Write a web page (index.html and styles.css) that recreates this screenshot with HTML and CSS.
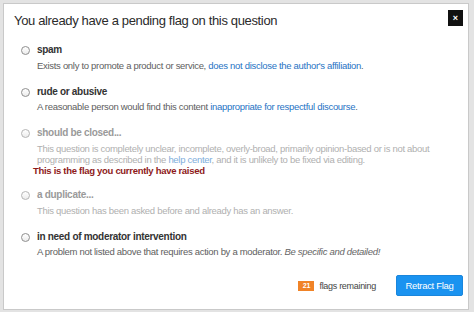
FILE: index.html
```html
<!DOCTYPE html>
<html lang="en">
<head>
    <meta charset="UTF-8">
    <meta name="viewport" content="width=device-width, initial-scale=1.0">
    <title>Flag this question</title>
    <link rel="stylesheet" href="styles.css">
</head>
<body>

<div class="dialog">
    <div class="dialog-header">
        <h1>You already have a pending flag on this question</h1>
        <button class="close-button" title="close">&times;</button>
    </div>

    <ul class="flag-options">
        <li class="flag-option">
            <span class="radio"></span>
            <div>
                <div class="flag-label">spam</div>
                <div class="flag-desc">Exists only to promote a product or service, <a href="#">does not disclose the author's affiliation</a>.</div>
            </div>
        </li>
        <li class="flag-option">
            <span class="radio"></span>
            <div>
                <div class="flag-label">rude or abusive</div>
                <div class="flag-desc">A reasonable person would find this content <a href="#">inappropriate for respectful discourse</a>.</div>
            </div>
        </li>
        <li class="flag-option disabled">
            <span class="radio"></span>
            <div>
                <div class="flag-label">should be closed...</div>
                <div class="flag-desc">This question is completely unclear, incomplete, overly-broad, primarily opinion-based or is not about<br>programming as described in the <a href="#">help center</a>, and it is unlikely to be fixed via editing.</div>
                <div class="current-flag">This is the flag you currently have raised</div>
            </div>
        </li>
        <li class="flag-option disabled">
            <span class="radio"></span>
            <div>
                <div class="flag-label">a duplicate...</div>
                <div class="flag-desc">This question has been asked before and already has an answer.</div>
            </div>
        </li>
        <li class="flag-option">
            <span class="radio"></span>
            <div>
                <div class="flag-label">in need of moderator intervention</div>
                <div class="flag-desc">A problem not listed above that requires action by a moderator. <em>Be specific and detailed!</em></div>
            </div>
        </li>
    </ul>

    <div class="dialog-footer">
        <span class="flags-left"><span class="badge">21</span>flags remaining</span>
        <button class="retract-button">Retract Flag</button>
    </div>
</div>

</body>
</html>
```

FILE: styles.css
```css
body {
    font-family: "Liberation Sans", Arial, sans-serif;
    background-color: #e3e3e3;
    color: #333;
    margin: 0;
    padding: 3px 0 0 3px;
    letter-spacing: -0.3px;
}
.dialog {
    box-sizing: border-box;
    width: 466px;
    height: 307px;
    background-color: #fff;
    border: 1px solid #c9c9c9;
    display: flex;
    flex-direction: column;
}
.dialog-header {
    display: flex;
    justify-content: space-between;
    align-items: flex-start;
    padding: 6px 5px 0 10px;
}
.dialog-header h1 {
    margin: 0;
    font-size: 13px;
    font-weight: normal;
    line-height: 22px;
    color: #2b2b2b;
    letter-spacing: -0.35px;
}
.close-button {
    width: 15px;
    height: 16px;
    padding: 0;
    border: none;
    background-color: #111;
    color: #fff;
    font-family: "Liberation Sans", Arial, sans-serif;
    font-size: 9px;
    font-weight: bold;
    line-height: 16px;
    cursor: pointer;
}
.flag-options {
    list-style: none;
    margin: 0;
    padding: 12px 0 0 17px;
}
.flag-option {
    display: flex;
    gap: 7px;
    margin-bottom: 15px;
}
.flag-option:last-child {
    margin-bottom: 0;
}
.radio {
    flex: none;
    box-sizing: border-box;
    width: 9px;
    height: 9px;
    margin-top: 2px;
    border: 1px solid #8f8f8f;
    border-radius: 50%;
    background: linear-gradient(#fff, #ececec);
}
.flag-label {
    font-size: 10px;
    font-weight: bold;
    line-height: 12px;
}
.flag-desc {
    margin-top: 3.5px;
    font-size: 9.5px;
    line-height: 11px;
    color: #5e5e5e;
    max-width: 420px;
}
.flag-desc a {
    color: #1f73c4;
    text-decoration: none;
}
.flag-desc em {
    color: #666;
}
.disabled .radio {
    border-color: #b5b5b5;
}
.disabled .flag-label {
    color: #9a9a9a;
}
.disabled .flag-desc {
    color: #b0b0b0;
}
.disabled .flag-desc a {
    color: #7eaedb;
}
.current-flag {
    margin: 0 0 -2.5px -4px;
    font-size: 9.5px;
    font-weight: bold;
    line-height: 12px;
    color: #8e1a1a;
}
.dialog-footer {
    display: flex;
    justify-content: flex-end;
    align-items: center;
    gap: 20px;
    margin-top: 18px;
    padding-right: 5px;
}
.flags-left {
    display: flex;
    align-items: center;
    gap: 5px;
    font-size: 9px;
    color: #444;
}
.badge {
    width: 16px;
    height: 10px;
    background-color: #f08327;
    color: #fff;
    font-size: 7px;
    font-weight: bold;
    line-height: 10px;
    text-align: center;
}
.retract-button {
    width: 67px;
    height: 21px;
    padding: 0;
    border: 1px solid #1a86dc;
    border-radius: 2px;
    background-color: #1a93f0;
    color: #fff;
    font-family: "Liberation Sans", Arial, sans-serif;
    font-size: 9.5px;
    letter-spacing: -0.3px;
    cursor: pointer;
}
```
